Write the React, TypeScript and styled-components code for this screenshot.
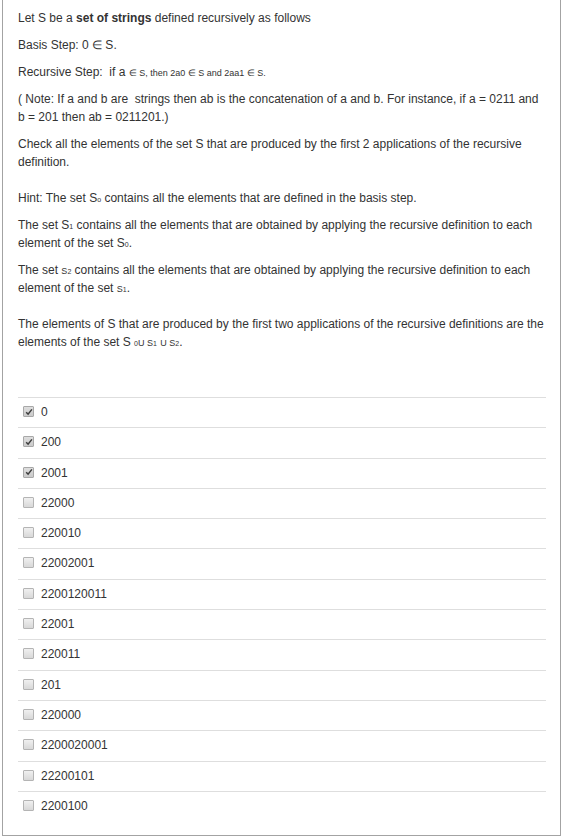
import React from "react";
import styled, { createGlobalStyle } from "styled-components";

const GlobalStyle = createGlobalStyle`
    body {
        margin: 0;
        background: #fff;
        font-family: "Liberation Sans", Arial, sans-serif;
    }
`;

const Panel = styled.div`
    margin-left: 2px;
    border: 1px solid #a3a3a3;
    border-top: none;
    padding: 9px 14px 14px 14px;
    box-sizing: content-box;
    width: 529px;
    font-size: 12px;
    line-height: 18px;
    color: #333;
`;

const Para = styled.p<{ $gapTop?: number }>`
    margin: 0 0 9px 1px;
    padding-top: ${(p) => p.$gapTop || 0}px;
`;

const Small = styled.span`
    font-size: 9px;
    line-height: 1;
`;

const Sub = styled.span`
    font-size: 7px;
    line-height: 1;
    vertical-align: baseline;
`;

const List = styled.div`
    margin-top: 46px;
    margin-left: 1px;
`;

const Row = styled.label`
    display: flex;
    align-items: center;
    gap: 7px;
    border-top: 1px solid #dedede;
    padding: 5px 0 6.3px 5px;
    line-height: 18px;
    color: #333;
`;

const Box = styled.span<{ $checked: boolean }>`
    width: 9px;
    height: 9px;
    flex: none;
    border: 1px solid ${(p) => (p.$checked ? "#a8a8a8" : "#b4b4b4")};
    border-radius: 1px;
    background: ${(p) =>
        p.$checked
            ? "linear-gradient(#dedede, #cacaca)"
            : "linear-gradient(#f0f0f0, #d8d8d8)"};
    display: flex;
    align-items: center;
    justify-content: center;
    margin-top: -1px;
`;

const Check: React.FC = () => (
    <svg width="8" height="8" viewBox="0 0 8 8">
        <path
            d="M1.2 4.2 L3.1 6.2 L6.9 1.4"
            fill="none"
            stroke="#3c3c3c"
            strokeWidth="1.5"
        />
    </svg>
);

const options: { value: string; checked: boolean }[] = [
    { value: "0", checked: true },
    { value: "200", checked: true },
    { value: "2001", checked: true },
    { value: "22000", checked: false },
    { value: "220010", checked: false },
    { value: "22002001", checked: false },
    { value: "2200120011", checked: false },
    { value: "22001", checked: false },
    { value: "220011", checked: false },
    { value: "201", checked: false },
    { value: "220000", checked: false },
    { value: "2200020001", checked: false },
    { value: "22200101", checked: false },
    { value: "2200100", checked: false },
];

export default function App() {
    return (
        <>
            <GlobalStyle />
            <Panel>
                <Para>
                    Let S be a <b>set of strings</b> defined recursively as
                    follows
                </Para>
                <Para>Basis Step: 0 ∈ S.</Para>
                <Para>
                    Recursive Step:&nbsp; if a{" "}
                    <Small>∈ S, then 2a0 ∈ S and 2aa1 ∈ S.</Small>
                </Para>
                <Para>
                    ( Note: If a and b are&nbsp; strings then ab is the
                    concatenation of a and b. For instance, if a = 0211 and b
                    = 201 then ab = 0211201.)
                </Para>
                <Para>
                    Check all the elements of the set S that are produced by
                    the first 2 applications of the recursive definition.
                </Para>
                <Para $gapTop={9}>
                    Hint: The set S<Sub>o</Sub> contains all the elements that
                    are defined in the basis step.
                </Para>
                <Para>
                    The set S<Sub>1</Sub> contains all the elements that are
                    obtained by applying the recursive definition to each
                    element of the set S<Sub>0</Sub>.
                </Para>
                <Para>
                    The set <Small>S</Small>
                    <Sub>2</Sub> contains all the elements that are obtained by
                    applying the recursive definition to each element of the
                    set <Small>S</Small>
                    <Sub>1</Sub>.
                </Para>
                <Para $gapTop={9}>
                    The elements of S that are produced by the first two
                    applications of the recursive definitions are the elements
                    of the set S <Sub>0</Sub>
                    <Small>U S</Small>
                    <Sub>1</Sub> <Small>U S</Small>
                    <Sub>2</Sub>.
                </Para>
                <List>
                    {options.map((o) => (
                        <Row key={o.value}>
                            <Box $checked={o.checked}>
                                {o.checked && <Check />}
                            </Box>
                            {o.value}
                        </Row>
                    ))}
                </List>
            </Panel>
        </>
    );
}
